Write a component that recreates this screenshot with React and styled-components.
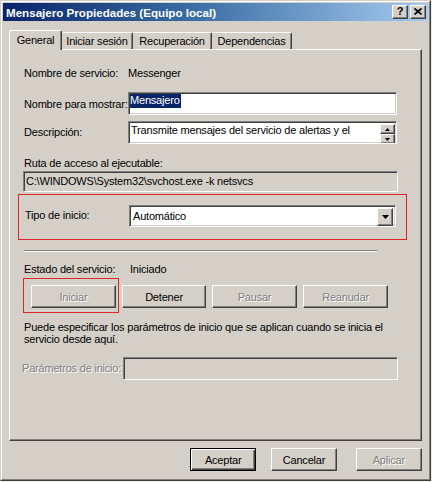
import React from "react";
import styled, { createGlobalStyle, css } from "styled-components";

const FACE = "#D4D0C8";
const SHADOW = "#808080";
const DARK = "#404040";

const GlobalStyle = createGlobalStyle`
  html, body { margin: 0; padding: 0; background: #ecebe6; }
  body { font-family: "Liberation Sans", Arial, sans-serif; font-size: 11px; }
  * { box-sizing: border-box; }
`;

const Window = styled.div`
  width: 431px;
  height: 481px;
  background: ${FACE};
  border: 1px solid;
  border-color: ${FACE} ${DARK} ${DARK} ${FACE};
  display: flex;
  flex-direction: column;
  color: #000;
  letter-spacing: -0.2px;
`;

const Frame = styled.div`
  flex: 1;
  display: flex;
  flex-direction: column;
  border: 1px solid;
  border-color: #fff ${SHADOW} ${SHADOW} #fff;
  padding: 1px;
`;

const TitleBar = styled.div`
  height: 18px;
  display: flex;
  align-items: center;
  justify-content: space-between;
  padding: 0 2px 0 3px;
  background: linear-gradient(to right, #0a246a 0%, #3a6ea5 45%, #a6caf0 100%);
`;

const Title = styled.span`
  color: #fff;
  font-weight: bold;
  font-size: 11.6px;
  letter-spacing: 0;
  white-space: nowrap;
`;

const CaptionButtons = styled.div`
  display: flex;
  gap: 2px;
`;

const raised = css`
  background: ${FACE};
  border: 1px solid;
  border-color: #fff ${DARK} ${DARK} #fff;
  box-shadow: inset -1px -1px ${SHADOW};
`;

const CaptionButton = styled.div`
  ${raised};
  width: 16px;
  height: 14px;
  display: flex;
  align-items: center;
  justify-content: center;
  font-weight: bold;
  font-size: 11px;
  letter-spacing: 0;
  line-height: 1;
  padding-bottom: 1px;
`;

const Body = styled.div`
  flex: 1;
  display: flex;
  flex-direction: column;
  padding: 0 6px;
`;

const TabStrip = styled.div`
  margin-top: 9px;
  height: 19px;
  display: flex;
  align-items: flex-end;
  position: relative;
  z-index: 1;
`;

const Tab = styled.div`
  width: ${(p) => p.$w}px;
  height: ${(p) => (p.$active ? 20 : 17)}px;
  margin-bottom: ${(p) => (p.$active ? -1 : 0)}px;
  background: ${FACE};
  border-top: 1px solid #fff;
  border-left: ${(p) => (p.$active || p.$first ? "1px solid #fff" : "none")};
  border-right: 1px solid ${DARK};
  box-shadow: inset -1px 0 ${SHADOW};
  border-top-left-radius: 2px;
  border-top-right-radius: 2px;
  display: flex;
  align-items: ${(p) => (p.$active ? "flex-start" : "center")};
  padding-top: ${(p) => (p.$active ? 3 : 0)}px;
  justify-content: center;
  white-space: nowrap;
`;

const Panel = styled.div`
  height: 392px;
  border: 1px solid;
  border-color: #fff ${DARK} ${DARK} #fff;
  box-shadow: inset -1px -1px ${SHADOW};
  padding: 0 14px;
  display: flex;
  flex-direction: column;
`;

const TextLine = styled.div`
  margin-top: ${(p) => p.$top}px;
  height: 14px;
  line-height: 14px;
  display: flex;
  white-space: nowrap;
`;

const LabelCell = styled.span`
  width: ${(p) => p.$w}px;
  flex: none;
  color: ${(p) => (p.$disabled ? SHADOW : "#000")};
  text-shadow: ${(p) => (p.$disabled ? "1px 1px #fff" : "none")};
  padding-top: ${(p) => p.$pt || 0}px;
`;

const FieldRow = styled.div`
  margin-top: ${(p) => p.$top}px;
  margin-left: ${(p) => p.$ml || 0}px;
  height: ${(p) => p.$h || 23}px;
  display: flex;
  align-items: flex-start;
  white-space: nowrap;
`;

const sunken = css`
  border: 1px solid;
  border-color: ${SHADOW} #fff #fff ${SHADOW};
  box-shadow: inset 1px 1px ${DARK}, inset -1px -1px ${FACE};
`;

const EditBox = styled.div`
  ${sunken};
  width: ${(p) => p.$w}px;
  height: ${(p) => p.$h || 23}px;
  background: ${(p) => (p.$gray ? FACE : "#fff")};
  padding: ${(p) => p.$pad || "2px 2px"};
  display: flex;
  align-items: flex-start;
  overflow: hidden;
  white-space: nowrap;
`;

const Selected = styled.span`
  background: #0a246a;
  color: #fff;
  padding: 0 1px 1px 0;
  line-height: 13px;
`;

const EditText = styled.span`
  flex: 1;
  line-height: ${(p) => p.$lh || 13}px;
  padding-left: ${(p) => p.$pl || 0}px;
  overflow: hidden;
`;

const SpinColumn = styled.div`
  display: flex;
  flex-direction: column;
`;

const SpinButton = styled.div`
  ${raised};
  width: 15px;
  height: 10px;
  display: flex;
  align-items: center;
  justify-content: center;
`;

const StartupBox = styled.div`
  margin-top: 2px;
  margin-left: -6px;
  width: 389px;
  height: 46px;
  border: 1px solid #e0232b;
  padding: 10px 0 0 6px;
  display: flex;
  align-items: flex-start;
  white-space: nowrap;
`;

const DropButton = styled.div`
  ${raised};
  width: 16px;
  height: 18px;
  display: flex;
  align-items: center;
  justify-content: center;
  flex: none;
`;

const Separator = styled.div`
  margin-top: 10px;
  width: 353px;
  height: 2px;
  border-top: 1px solid ${SHADOW};
  border-bottom: 1px solid #fff;
`;

const ButtonRow = styled.div`
  margin-top: ${(p) => p.$top}px;
  margin-left: ${(p) => p.$ml || 0}px;
  display: flex;
  gap: ${(p) => p.$gap || 0}px;
`;

const Button = styled.div`
  position: relative;
  width: ${(p) => p.$w}px;
  height: 23px;
  margin-left: ${(p) => p.$ml || 0}px;
  ${raised};
  display: flex;
  align-items: center;
  justify-content: center;
  white-space: nowrap;
  color: ${(p) => (p.$disabled ? SHADOW : "#000")};
  text-shadow: ${(p) => (p.$disabled ? "1px 1px #fff" : "none")};
  ${(p) =>
    p.$default &&
    css`
      border: 1px solid #000;
      box-shadow: inset 1px 1px #fff, inset -1px -1px ${DARK}, inset -2px -2px ${SHADOW};
    `}
  ${(p) =>
    p.$marked &&
    css`
      &::after {
        content: "";
        position: absolute;
        top: -8px;
        left: -9px;
        right: -4px;
        bottom: -6px;
        border: 1px solid #e0232b;
        pointer-events: none;
      }
    `}
`;

const Paragraph = styled.div`
  margin-top: 13px;
  line-height: 12px;
  width: 380px;
`;

const Footer = styled.div`
  margin-top: 7px;
  display: flex;
`;

const Triangle = ({ dir = "down", w = 7, h = 4 }) => (
  <svg width={w} height={h} viewBox={`0 0 ${w} ${h}`} style={{ display: "block" }}>
    {dir === "down" ? (
      <polygon points={`0,0 ${w},0 ${w / 2},${h}`} fill="#000" />
    ) : (
      <polygon points={`0,${h} ${w},${h} ${w / 2},0`} fill="#000" />
    )}
  </svg>
);

const CloseGlyph = () => (
  <svg width="8" height="7" viewBox="0 0 8 7" style={{ display: "block" }}>
    <path d="M0.5 0.5 L7.5 6.5 M7.5 0.5 L0.5 6.5" stroke="#000" strokeWidth="1.7" />
  </svg>
);

export default function App() {
  return (
    <>
      <GlobalStyle />
      <Window>
        <Frame>
          <TitleBar>
            <Title>Mensajero Propiedades (Equipo local)</Title>
            <CaptionButtons>
              <CaptionButton>?</CaptionButton>
              <CaptionButton>
                <CloseGlyph />
              </CaptionButton>
            </CaptionButtons>
          </TitleBar>
          <Body>
            <TabStrip>
              <Tab $active $first $w={53}>General</Tab>
              <Tab $w={71}>Iniciar sesión</Tab>
              <Tab $w={79}>Recuperación</Tab>
              <Tab $w={80}>Dependencias</Tab>
            </TabStrip>
            <Panel>
              <TextLine $top={16}>
                <LabelCell $w={104}>Nombre de servicio:</LabelCell>
                <span>Messenger</span>
              </TextLine>
              <FieldRow $top={12}>
                <LabelCell $w={104} $pt={6}>Nombre para mostrar:</LabelCell>
                <EditBox $w={269} $pad="1px 2px 1px 1px">
                  <Selected>Mensajero</Selected>
                </EditBox>
              </FieldRow>
              <FieldRow $top={6}>
                <LabelCell $w={104} $pt={5}>Descripción:</LabelCell>
                <EditBox $w={269} $pad="2px 1px 2px 2px">
                  <EditText $lh={12}>Transmite mensajes del servicio de alertas y el</EditText>
                  <SpinColumn>
                    <SpinButton>
                      <Triangle dir="up" w={5} h={3} />
                    </SpinButton>
                    <SpinButton>
                      <Triangle dir="down" w={5} h={3} />
                    </SpinButton>
                  </SpinColumn>
                </EditBox>
              </FieldRow>
              <TextLine $top={12}>Ruta de acceso al ejecutable:</TextLine>
              <FieldRow $top={1} $ml={-1} $h={21}>
                <EditBox $w={375} $h={21} $gray $pad="2px 2px">
                  <EditText $lh={14}>C:\WINDOWS\System32\svchost.exe -k netsvcs</EditText>
                </EditBox>
              </FieldRow>
              <StartupBox>
                <LabelCell $w={104} $pt={4}>Tipo de inicio:</LabelCell>
                <EditBox $w={267} $h={22} $pad="2px 2px 2px 2px">
                  <EditText $lh={16} $pl={1}>Automático</EditText>
                  <DropButton>
                    <Triangle dir="down" w={7} h={4} />
                  </DropButton>
                </EditBox>
              </StartupBox>
              <Separator />
              <TextLine $top={10}>
                <LabelCell $w={106}>Estado del servicio:</LabelCell>
                <span>Iniciado</span>
              </TextLine>
              <ButtonRow $top={9} $ml={7} $gap={6}>
                <Button $w={85} $disabled $marked>Iniciar</Button>
                <Button $w={84}>Detener</Button>
                <Button $w={85} $disabled>Pausar</Button>
                <Button $w={85} $disabled>Reanudar</Button>
              </ButtonRow>
              <Paragraph>
                Puede especificar los parámetros de inicio que se aplican cuando se inicia el
                <br />
                servicio desde aquí.
              </Paragraph>
              <FieldRow $top={12} $ml={-2}>
                <LabelCell $w={101} $pt={5} $disabled>Parámetros de inicio:</LabelCell>
                <EditBox $w={275} $gray />
              </FieldRow>
            </Panel>
            <Footer>
              <Button $w={67} $ml={181} $default>Aceptar</Button>
              <Button $w={66} $ml={15}>Cancelar</Button>
              <Button $w={67} $ml={19} $disabled>Aplicar</Button>
            </Footer>
          </Body>
        </Frame>
      </Window>
    </>
  );
}
